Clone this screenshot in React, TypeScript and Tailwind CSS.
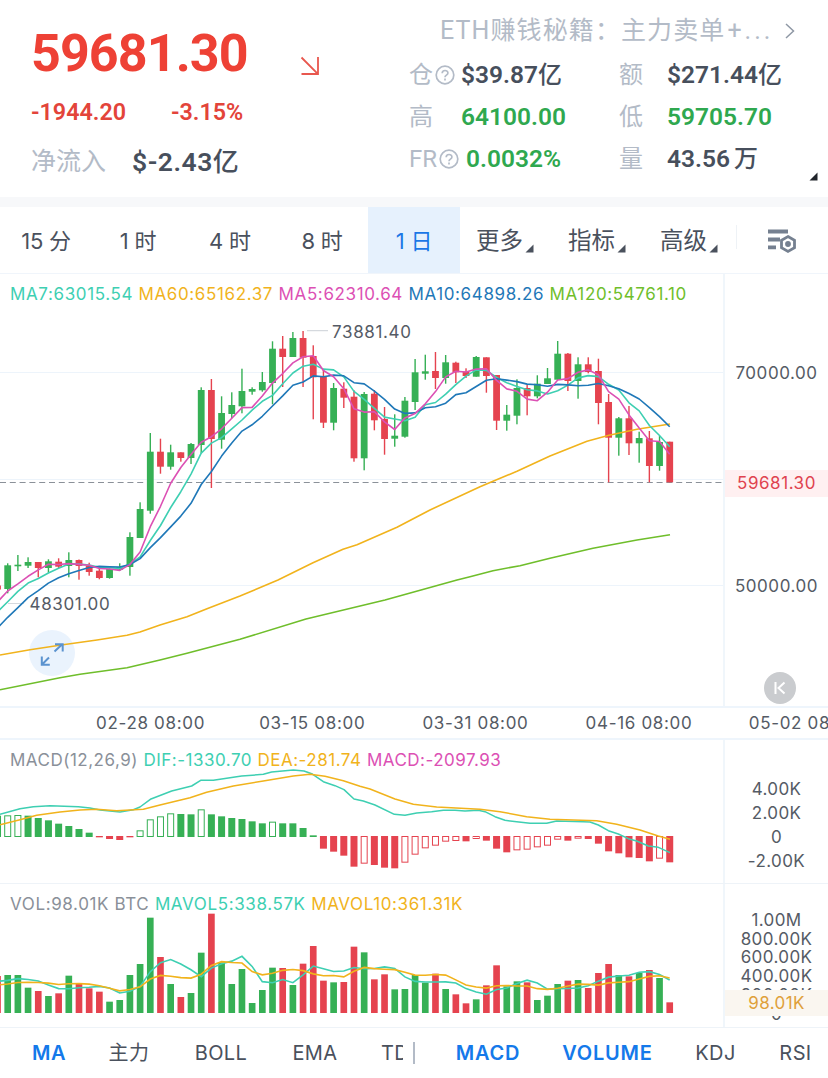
import { useState } from "react";
import clsx from "clsx";

const UP = "#36b055";
const DOWN = "#e5434f";
const TEAL = "#3ecfb2";
const YELLOW = "#f1b31c";
const PINK = "#dc50b4";
const BLUE = "#1f78b8";
const LIME = "#6fbe2b";

const STEP = 10.185;
const FIRST_X = 7.7;
const xAt = (i: number) => FIRST_X + i * STEP;

type Candle = [up: 0 | 1, high: number, low: number, top: number, bottom: number];

// index 0 of every series is the candle cut off by the left edge
const candles: Candle[] = [
  [0, 585, 590, 585.5, 589.5],
  [1, 563.3, 593.3, 565.3, 589],
  [1, 555, 571, 564.7, 566.3],
  [1, 557.3, 568, 562, 565.7],
  [0, 562, 577.3, 562, 568],
  [1, 559.3, 572.7, 561.3, 568],
  [0, 558.3, 568, 561.7, 566.7],
  [1, 552.3, 577.3, 560, 566],
  [0, 559.5, 579.7, 560, 566],
  [0, 562.7, 575.7, 566, 572],
  [0, 566.7, 579.3, 570.7, 578],
  [1, 568.5, 578.7, 569, 578],
  [1, 563.3, 571, 567, 569.7],
  [1, 532.3, 575.7, 537, 567],
  [1, 502.3, 538, 509, 538],
  [1, 433, 513.7, 451.7, 510.7],
  [0, 438.7, 473.7, 451.7, 466.7],
  [1, 444.7, 469.7, 452.3, 466.7],
  [0, 452.3, 461.7, 452.3, 458],
  [1, 443, 464, 444, 458],
  [1, 387.3, 453.3, 390, 445],
  [0, 379, 488, 390, 439],
  [1, 396.3, 448.7, 413, 439.7],
  [1, 392.3, 418.3, 405, 414],
  [1, 368.7, 413.3, 391, 406.3],
  [1, 387.3, 394.7, 389, 391.7],
  [1, 372, 391.7, 382, 390.3],
  [1, 341.3, 404.3, 348.7, 383],
  [0, 336, 387, 348.7, 357],
  [1, 332, 357, 338, 357],
  [0, 331, 387, 338, 357.7],
  [0, 345.3, 419.3, 356, 377.3],
  [0, 369.3, 428, 376.7, 422.7],
  [1, 383, 430.3, 388, 422.7],
  [0, 382.3, 408, 388.7, 397.7],
  [0, 390.3, 461.7, 396.7, 458.3],
  [1, 392, 470.3, 394, 458.3],
  [0, 390, 430.3, 393.7, 420.3],
  [0, 407, 454.7, 419, 439],
  [1, 414.3, 446.7, 435.7, 438.7],
  [1, 397, 437.7, 400.7, 436.7],
  [1, 359, 410, 372.3, 402],
  [1, 354.7, 379.7, 371.3, 373.7],
  [0, 352, 389, 371, 378],
  [1, 355, 383.7, 362.3, 378],
  [0, 361.7, 383, 362.7, 372.3],
  [0, 368.3, 378, 371.7, 376],
  [1, 356, 376.7, 357, 376.7],
  [0, 357.3, 392.7, 357.3, 376],
  [0, 375, 430, 375, 420.7],
  [1, 405, 430.7, 414.7, 420.7],
  [1, 379.3, 424.3, 388, 415.7],
  [0, 385, 415.3, 388, 396.3],
  [1, 375.3, 398.3, 383.7, 396.3],
  [1, 368, 384, 378.3, 384],
  [1, 341, 380, 353.7, 379.7],
  [0, 353, 391, 353.7, 381],
  [1, 357.3, 398.7, 364.3, 381],
  [0, 357.3, 373.3, 364.3, 372],
  [0, 358.7, 424.3, 371, 403],
  [0, 394, 482.3, 402, 437.7],
  [1, 417, 455.7, 418.3, 437.7],
  [0, 406, 455, 418.3, 443.3],
  [1, 431.7, 462.7, 438, 443.3],
  [0, 431, 482.3, 438.3, 466],
  [1, 436, 470.7, 442, 466],
  [0, 441.7, 482.3, 441.7, 482.3],
];

// bars older than the visible range, needed for the averages
const closeHistory = [672, 662, 662, 637.5, 637, 620, 600, 600, 600];
const volumeHistory = [299, 314, 314, 314, 314, 284, 296, 296, 296];

const volumes = [
  273, 270, 270, 308, 318, 333, 325, 272, 294, 310, 320, 350, 345, 270, 237, 98, 216, 297, 336, 324, 203, 86,
  232, 297, 252, 354, 315, 248, 249, 300, 236, 183, 287, 292, 291, 185, 202, 283, 268, 313, 312, 270, 293, 266,
  312, 328, 355, 343, 301, 241, 304, 289, 292, 345, 332, 297, 287, 285, 309, 264, 237, 270, 274, 264, 255, 279,
  352,
];

// [edge, hollow]
const macdBars: [number, 0 | 1][] = [
  [227, 0], [226, 1], [225, 1], [227, 0], [234, 0], [241, 0], [251, 0], [258, 0], [267, 0], [278, 0],
  [292, 0], [297, 0], [300, 0], [291, 0], [271, 1], [238, 1], [229, 1], [220, 1], [222, 0], [223, 0],
  [208, 1], [223, 0], [229, 0], [234, 0], [237, 0], [244, 0], [250, 0], [245, 1], [250, 0], [250, 0],
  [264, 0], [286, 0], [326, 0], [335, 0], [347, 0], [380, 0], [371, 1], [375, 0], [383, 0], [385, 0],
  [368, 1], [344, 1], [325, 1], [317, 1], [305, 1], [303, 1], [304, 0], [297, 1], [302, 0], [326, 0],
  [337, 0], [331, 1], [329, 1], [322, 1], [317, 1], [299, 1], [302, 0], [296, 1], [297, 0], [311, 0],
  [334, 0], [340, 0], [352, 0], [354, 0], [364, 0], [356, 1], [367, 0],
];

const MA60 =
  "0,655 30,649.7 63,644.7 97,640 127,635.3 140,632 160,625 187,616.7 207,608.7 240,596 278,580 313,562.7 343,549.3 357,544.7 397,527.3 430,510 480,486.7 493,481.3 517,471.3 550,456 587,441.3 609,435.3 637,429.3 670,424";
const MA120 =
  "0,689.7 60,677.7 80,674.3 127,667.7 160,660 187,653.3 240,639.3 306,619 385,600 457,580 470,576.7 493,570.7 520,565.7 550,558.3 593,548.3 637,540 670,534.7";
const DIF =
  "0,223 60,206 100,200 150,197 235,200 270,204 300,210 360,216 400,209 420,201 451,178 515,153 575,138 602,121 640,121 725,108 790,103 815,96 880,90 912,93 935,101 970,125 1005,137 1032,149 1062,177 1090,183 1125,195 1183,223 1215,226 1250,219 1295,215 1330,211 1365,211 1395,213 1435,211 1455,215 1485,230 1515,241 1550,245 1590,250 1640,250 1670,243 1750,245 1770,246 1795,255 1825,272 1855,282 1885,296 1910,303 1945,318 1975,322 2010,338";
const DEA =
  "0,254 60,239 110,226 180,216 240,210 290,208 350,212 430,208 480,195 570,173 620,157 700,138 790,123 880,108 930,103 975,109 1030,122 1080,139 1110,147 1185,177 1240,193 1310,201 1440,208 1500,215 1580,230 1650,238 1790,242 1850,253 1920,270 1975,288 2010,298";

function average(values: number[], history: number[], period: number) {
  const all = [...history, ...values];
  return values.map((_, i) => {
    const end = i + history.length + 1;
    const slice = all.slice(Math.max(0, end - period), end);
    return slice.reduce((a, b) => a + b, 0) / slice.length;
  });
}

const toPoints = (ys: number[]) => ys.map((y, i) => `${xAt(i - 1).toFixed(1)},${y.toFixed(1)}`).join(" ");

const closes = candles.map(([up, , , top, bottom]) => (up ? top : bottom));

function Line({ points, color, width = 1.6 }: { points: string; color: string; width?: number }) {
  return <polyline points={points} fill="none" stroke={color} strokeWidth={width} strokeLinejoin="round" />;
}

function Help() {
  return (
    <svg className="ml-[2px]" width="20" height="20" viewBox="0 0 20 20" fill="none" stroke="#b3bbc7" strokeWidth="1.7">
      <circle cx="10" cy="10" r="8.8" />
      <path d="M7.2 8.2c0-3.6 5.7-3.5 5.7-.2 0 2.100-2.900 2.100-2.900 4.200" />
      <path d="M10 13.600v1.900" />
    </svg>
  );
}

function Corner({ className }: { className?: string }) {
  return (
    <svg className={className} width="9" height="9" viewBox="0 0 9 9">
      <path d="M8.500 0.500v8h-8z" fill="currentColor" />
    </svg>
  );
}

type StatProps = {
  label: string;
  help?: boolean;
  value: string;
  green?: boolean;
  cjk?: string;
  labelWidth: string;
};

function Stat({ label, help, value, green, cjk, labelWidth }: StatProps) {
  return (
    <div className="flex h-[42px] items-center">
      <div className={clsx("flex shrink-0 items-center text-[24px] text-[#b3bbc7]", labelWidth)}>
        {label}
        {help && <Help />}
      </div>
      <div
        className={clsx(
          "text-[24.500px] font-semibold whitespace-nowrap",
          green ? "text-[#2fa84f]" : "text-[#474f5c]"
        )}
      >
        {value}
        {cjk && <span className={clsx("text-[24px] font-medium", cjk === "万" && "ml-[4px]")}>{cjk}</span>}
      </div>
    </div>
  );
}

function Header() {
  return (
    <header className="flex h-[197px] font-[Roboto,'Noto_Sans_CJK_SC',sans-serif]">
      <div className="w-[409px] pl-[31px]">
        <div className="flex h-[92px] items-center pt-[15px]">
          <span className="w-[269px] text-[52px] leading-none font-bold tracking-[-0.900px] text-[#ee4135]">59681.30</span>
          <svg className="mt-[25px]" width="20" height="20" viewBox="0 0 20 20" fill="none" stroke="#e8574e" strokeWidth="1.8">
            <path d="M1.500 1.500L17.800 17.800M18 1v17H1.500" />
          </svg>
        </div>
        <div className="flex h-[41px] items-center text-[23.300px] font-semibold text-[#e3443a]">
          <span className="w-[140px]">-1944.20</span>
          <span>-3.15%</span>
        </div>
        <div className="flex h-[58px] items-center">
          <span className="w-[101px] text-[25px] text-[#b3bbc7]">净流入</span>
          <span className="text-[26.500px] font-semibold tracking-[0.500px] text-[#474f5c]">
            $-2.43<span className="text-[26px] font-medium">亿</span>
          </span>
        </div>
      </div>
      <div className="relative w-[419px] pt-[8px]">
        <div className="flex h-[46px] items-center pl-[31px] text-[25px] tracking-[1.100px] whitespace-nowrap text-[#b3bbc7]">
          <span className="w-[345px]">
            ETH赚钱秘籍：主力卖单<span className="ml-[2px] tracking-[3px]">+...</span>
          </span>
          <svg width="10" height="16" viewBox="0 0 10 16" fill="none" stroke="#8f98a5" strokeWidth="1.500">
            <path d="M1 1l7.500 7L1 15" />
          </svg>
        </div>
        <div className="grid grid-cols-[210px_1fr]">
          <Stat label="仓" help value="$39.87" cjk="亿" labelWidth="w-[52px]" />
          <Stat label="额" value="$271.44" cjk="亿" labelWidth="w-[48px]" />
          <Stat label="高" value="64100.00" green labelWidth="w-[52px]" />
          <Stat label="低" value="59705.70" green labelWidth="w-[48px]" />
          <Stat label="FR" help value="0.0032%" green labelWidth="w-[57px]" />
          <Stat label="量" value="43.56" cjk="万" labelWidth="w-[48px]" />
        </div>
        <Corner className="absolute right-[10px] bottom-[16px] text-[#20242b]" />
      </div>
    </header>
  );
}

function PeriodTabs() {
  const [active, setActive] = useState("1 日");
  const periods = ["15 分", "1 时", "4 时", "8 时", "1 日"];
  return (
    <nav className="flex h-[67px] border-b border-[#f0f5fb] text-[22px] text-[#4a515d]">
      {periods.map((p) => (
        <button
          key={p}
          onClick={() => setActive(p)}
          className={clsx(
            "w-[92px] pt-[2px] tracking-[-0.200px] whitespace-nowrap",
            active === p && "bg-[#e6f1fd] text-[#1b77e6]"
          )}
        >
          {p}
        </button>
      ))}
      {["更多", "指标", "高级"].map((m) => (
        <button key={m} className="flex w-[92px] items-center pt-[2px] pl-4">
          <span className="text-[23.500px]">{m}</span>
          <Corner className="mt-[14px] ml-[2px]" />
        </button>
      ))}
      <div className="mt-[18px] h-6 w-px bg-[#eef2f6]" />
      <div className="flex items-center pt-[2px] pl-[30px]">
        <svg width="30" height="26" viewBox="0 0 30 26" fill="none" stroke="#758090">
          <path d="M1 3.500h20M1 11.500h12M1 19.300h8" strokeWidth="3.800" />
          <path d="M21 8.500l6.500 3.700v7.400L21 23.400l-6.500-3.800v-7.400z" strokeWidth="2.800" />
          <circle cx="21" cy="16" r="2.900" fill="#758090" stroke="none" />
        </svg>
      </div>
    </nav>
  );
}

function Legend({ items, tight }: { items: [string, string][]; tight?: boolean }) {
  return (
    <div
      className={clsx(
        "absolute top-[9px] left-[10px] flex text-[17px] leading-[22px] whitespace-nowrap",
        tight ? "gap-[5.500px] tracking-[0.500px]" : "gap-[5.500px] tracking-[0.620px]"
      )}
    >
      {items.map(([text, color]) => (
        <span key={text} style={{ color }}>
          {text}
        </span>
      ))}
    </div>
  );
}

function PriceChart() {
  return (
    <section className="flex h-[432px]">
      <div className="relative w-[725px] border-r-2 border-[#f0f6fb]">
        <svg className="block" width="723" height="432" viewBox="0 274 723 432">
          <path d="M0 372.500h723M0 479.500h723M0 585.500h723" stroke="#edf4fb" strokeWidth="1.200" />
          <path d="M0 482.500h723" stroke="#8b9199" strokeWidth="1.200" strokeDasharray="6 3.800" />
          <path d="M307 330.700h21M8 603.500h16" stroke="#d5d9de" strokeWidth="1.200" />
          <circle cx="52" cy="653" r="23" fill="#eaf3fd" />
          {candles.map(([up, high, low, top, bottom], i) => (
            <g key={i} fill={up ? UP : DOWN}>
              <rect x={xAt(i - 1) - 0.7} y={high} width="1.4" height={low - high} />
              <rect x={xAt(i - 1) - 3.4} y={top} width="6.8" height={bottom - top} />
            </g>
          ))}
          <Line points={MA60} color={YELLOW} />
          <Line points={MA120} color={LIME} />
          <Line points={toPoints(average(closes, closeHistory, 7))} color={TEAL} />
          <Line points={toPoints(average(closes, closeHistory, 10))} color={BLUE} />
          <Line points={toPoints(average(closes, closeHistory, 5))} color={PINK} />
          <path
            d="M54.500 651.500l8-7.500M55 644.200h7.700v7.300M49 657.500l-7 7M41.800 656.500v8.200h8"
            fill="none"
            stroke="#5b93cf"
            strokeWidth="2"
          />
          <g fill="#555b65" fontSize="17" letterSpacing="0.650">
            <text x="332" y="337.500">73881.40</text>
            <text x="29.500" y="610">48301.00</text>
          </g>
        </svg>
        <Legend
          items={[
            ["MA7:63015.54", TEAL],
            ["MA60:65162.37", YELLOW],
            ["MA5:62310.64", PINK],
            ["MA10:64898.26", BLUE],
            ["MA120:54761.10", LIME],
          ]}
        />
      </div>
      <div className="flex w-[103px] flex-col items-center text-[17px] tracking-[0.550px] text-[#555b65]">
        <div className="mt-[89px] h-5 leading-5">70000.00</div>
        <div className="mt-[87px] h-[27px] w-full bg-[#fff0f1] text-center leading-[27px] text-[#e0434f]">59681.30</div>
        <div className="mt-[79px] h-5 leading-5">50000.00</div>
        <div className="mt-[76px] ml-[6px] flex size-8 items-center justify-center rounded-full bg-[#cacccf]">
          <svg width="14" height="14" viewBox="0 0 14 14" fill="none" stroke="#fff" strokeWidth="2">
            <path d="M2.500 1v12M11.500 1.500L5.500 7l6 5.500" />
          </svg>
        </div>
      </div>
    </section>
  );
}

function DateAxis() {
  return (
    <div className="flex h-[34px] items-center overflow-hidden border-y-2 border-[#eef5fc] pt-[2px] pl-[96px] text-[17px] tracking-[0.680px] whitespace-nowrap text-[#555b65]">
      {["02-28 08:00", "03-15 08:00", "03-31 08:00", "04-16 08:00", "05-02 08:00"].map((d) => (
        <span key={d} className="w-[163.200px] shrink-0">
          {d}
        </span>
      ))}
    </div>
  );
}

function MacdChart() {
  return (
    <section className="flex h-[143px]">
      <div className="relative w-[725px] border-r-2 border-[#f0f6fb]">
        <svg className="block" width="723" height="143" viewBox="0 0 2169 429">
          {macdBars.map(([edge, hollow], i) => {
            const positive = edge < 287;
            const color = positive ? UP : DOWN;
            const top = positive ? edge : 288;
            const bottom = positive ? 291 : edge;
            const x = xAt(i - 1) * 3;
            return hollow ? (
              <rect key={i} x={x - 9} y={top + 1.5} width="18" height={bottom - top - 3} fill="#fff" stroke={color} strokeWidth="3" />
            ) : (
              <rect key={i} x={x - 10.5} y={top} width="21" height={Math.max(4, bottom - top)} fill={color} />
            );
          })}
          <Line points={DIF} color={TEAL} width={4.6} />
          <Line points={DEA} color={YELLOW} width={4.6} />
        </svg>
        <Legend
          tight
          items={[
            ["MACD(12,26,9)", "#8a9099"],
            ["DIF:-1330.70", TEAL],
            ["DEA:-281.74", YELLOW],
            ["MACD:-2097.93", PINK],
          ]}
        />
      </div>
      <div className="w-[103px] pt-[37px] text-center text-[17px] leading-6 tracking-[0.400px] text-[#555b65]">
        {["4.00K", "2.00K", "0", "-2.00K"].map((t) => (
          <div key={t}>{t}</div>
        ))}
      </div>
    </section>
  );
}

function VolumeChart() {
  return (
    <section className="flex h-[145px] border-y border-[#eef3f8]">
      <div className="relative w-[725px] border-r-2 border-[#f0f6fb]">
        <svg className="block" width="723" height="143" viewBox="0 -3 2169 429">
          {volumes.map((y, i) => (
            <rect key={i} x={xAt(i - 1) * 3 - 10} y={y} width="20" height={384 - y} fill={candles[i][0] ? UP : DOWN} />
          ))}
          <g transform="scale(3 1)">
            <polyline
              points={toPoints(average(volumes, volumeHistory, 5))}
              fill="none"
              stroke={TEAL}
              strokeWidth="1.6"
              vectorEffect="non-scaling-stroke"
            />
            <polyline
              points={toPoints(average(volumes, volumeHistory, 10))}
              fill="none"
              stroke={YELLOW}
              strokeWidth="1.6"
              vectorEffect="non-scaling-stroke"
            />
          </g>
        </svg>
        <Legend
          items={[
            ["VOL:98.01K BTC", "#8a9099"],
            ["MAVOL5:338.57K", TEAL],
            ["MAVOL10:361.31K", YELLOW],
          ]}
        />
      </div>
      <div className="relative w-[103px] pt-[27px] text-center text-[17px] leading-[18.700px] tracking-[0.400px] text-[#555b65]">
        {["1.00M", "800.00K", "600.00K", "400.00K", "200.00K", "0"].map((t) => (
          <div key={t}>{t}</div>
        ))}
        <div className="absolute top-[106px] left-0 h-[26px] w-full bg-[#faf6f0] leading-[27px] text-[#dfa03a]">98.01K</div>
      </div>
    </section>
  );
}

function IndicatorTabs() {
  return (
    <footer className="flex h-[50px] items-center text-center text-[20px] tracking-[0.400px] whitespace-nowrap text-[#4a515d]">
      <span className="w-[98px] font-semibold text-[#1479ea]">MA</span>
      <span className="flex w-[62px] justify-center">主力</span>
      <span className="w-[122px]">BOLL</span>
      <span className="w-[66px]">EMA</span>
      <span className="w-[55px] overflow-hidden pl-[33px] text-left">TD</span>
      <span className="ml-[10px] h-[22px] w-[1.500px] bg-[#b3bbc7]" />
      <span className="w-[147px] font-semibold tracking-[0.800px] text-[#1479ea]">MACD</span>
      <span className="flex w-[92px] justify-center font-semibold tracking-[0.800px] text-[#1479ea]">VOLUME</span>
      <span className="w-[124px]">KDJ</span>
      <span className="flex w-[36px] justify-center">RSI</span>
    </footer>
  );
}

export default function App() {
  return (
    <div className="h-[1078px] w-[828px] overflow-hidden bg-white font-[Inter,'Noto_Sans_CJK_SC',sans-serif]">
      <Header />
      <div className="h-[10px] bg-[#f7f8fa]" />
      <PeriodTabs />
      <PriceChart />
      <DateAxis />
      <MacdChart />
      <VolumeChart />
      <IndicatorTabs />
    </div>
  );
}
